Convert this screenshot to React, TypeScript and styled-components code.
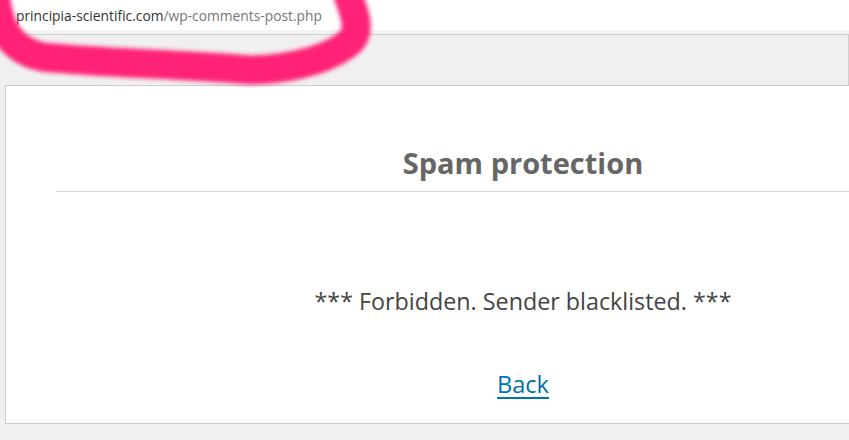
import React from "react";
import styled, { createGlobalStyle } from "styled-components";

const Global = createGlobalStyle`
  html, body { margin: 0; padding: 0; background: #f0f0f0; overflow: hidden; }
  body { width: 849px; height: 440px; font-family: "Open Sans", "Noto Sans", sans-serif; }
`;

const Page = styled.div`
  position: relative;
  width: 849px;
  height: 440px;
  display: flex;
  flex-direction: column;
  overflow: hidden;
`;

const UrlBar = styled.div`
  height: 30px;
  background: #ffffff;
  display: flex;
  align-items: center;
  padding-left: 16px;
  font-size: 13.8px;
  color: #777;
`;

const Host = styled.span`
  color: #333;
`;

const Strip = styled.div`
  height: 4px;
  background: #f3f3f3;
  border-bottom: 1px solid #cfcfcf;
`;

const Viewport = styled.div`
  flex: 1;
  background: #f0f0f0;
  padding-left: 5px;
  display: flex;
  flex-direction: column;
`;

const TopGap = styled.div`
  height: 50px;
  border-right: 1px solid #d0d0d0;
`;

const Card = styled.div`
  width: 934px;
  height: 337px;
  background: #fff;
  border: 1px solid #cccccc;
  padding: 0 50px;
  display: flex;
  flex-direction: column;
  align-items: stretch;
`;

const Heading = styled.h1`
  margin: 0;
  padding-top: 52px;
  padding-bottom: 3px;
  border-bottom: 1px solid #dadada;
  text-align: center;
  font-size: 29px;
  font-weight: 700;
  line-height: 50px;
  color: #666;
`;

const Message = styled.p`
  margin: 94px 0 0;
  text-align: center;
  font-size: 23.3px;
  line-height: 30px;
  color: #444;
`;

const BackLink = styled.a`
  display: block;
  margin: 53px auto 0;
  text-align: center;
  font-size: 23.6px;
  line-height: 30px;
  color: #0073aa;
  text-decoration: underline;
  text-underline-offset: 4px;
  text-decoration-thickness: 2px;
`;

const Scribble = styled.svg`
  position: absolute;
  left: 0;
  top: 0;
  pointer-events: none;
`;

export default function App() {
  return (
    <Page>
      <Global />
      <UrlBar>
        <Host>principia-scientific.com</Host>/wp-comments-post.php
      </UrlBar>
      <Strip />
      <Viewport>
        <TopGap />
        <Card>
          <Heading>Spam protection</Heading>
          <Message>*** Forbidden. Sender blacklisted. ***</Message>
          <BackLink href="#">Back</BackLink>
        </Card>
      </Viewport>
      <Scribble width="420" height="110" viewBox="0 0 420 110">
        <defs>
          <filter id="soft" x="-10%" y="-40%" width="120%" height="180%">
            <feGaussianBlur stdDeviation="2.2" />
          </filter>
        </defs>
        <path
          d="M -5 -12 C -3 30, 12 50, 42 57 C 100 63, 180 64, 250 70 C 300 69, 335 56, 352 40 C 362 25, 352 10, 346 -12"
          fill="none"
          stroke="#ff2277"
          strokeWidth="29"
          strokeLinecap="round"
          strokeLinejoin="round"
          filter="url(#soft)"
        />
      </Scribble>
    </Page>
  );
}
